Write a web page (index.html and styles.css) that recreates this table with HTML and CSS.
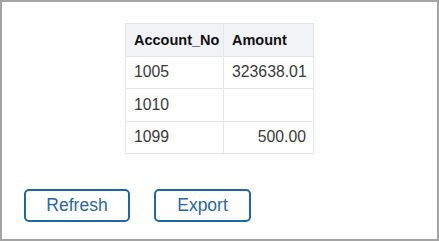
FILE: index.html
```html
<!DOCTYPE html>
<html>
<head>
<meta charset="utf-8">
<link rel="stylesheet" href="styles.css">
</head>
<body>
<div class="frame">
  <div class="table-wrap">
    <table class="grid">
      <thead>
        <tr><th class="col-acct">Account_No</th><th class="col-amt">Amount</th></tr>
      </thead>
      <tbody>
        <tr><td>1005</td><td class="num">323638.01</td></tr>
        <tr><td>1010</td><td class="num"></td></tr>
        <tr><td>1099</td><td class="num">500.00</td></tr>
      </tbody>
    </table>
  </div>
  <div class="actions">
    <button class="btn btn-refresh">Refresh</button>
    <button class="btn btn-export">Export</button>
  </div>
</div>
</body>
</html>
```
FILE: styles.css
```css
html, body {
  margin: 0;
  padding: 0;
  background: #ffffff;
}
.frame {
  box-sizing: border-box;
  width: 439px;
  height: 241px;
  border: 2px solid #a4a4a4;
  background: #fff;
  font-family: "Liberation Sans", Arial, sans-serif;
  padding: 21px 0 0 0;
}
.table-wrap {
  display: flex;
  padding-left: 123px;
}
.grid {
  border-collapse: collapse;
  border: 1px solid #e3e7ec;
  table-layout: fixed;
  width: 189px;
}
.grid th, .grid td {
  border: 1px solid #e3e7ec;
  padding: 0 7px 0 8px;
  height: 31.5px;
  text-align: left;
  white-space: nowrap;
  overflow: visible;
}
.grid th {
  background: #f1f3f7;
  color: #111;
  font-weight: bold;
  font-size: 14.5px;
}
.grid td {
  color: #3a3a3a;
  font-size: 15.8px;
}
.grid .col-acct { width: 82px; }
.grid td.num { text-align: right; }
.actions {
  display: flex;
  gap: 24px;
  padding: 35px 0 0 22px;
}
.btn {
  box-sizing: border-box;
  height: 33px;
  border: 2px solid #1f67a3;
  border-radius: 5px;
  background: #fff;
  color: #2867a0;
  font-family: "Liberation Sans", Arial, sans-serif;
  font-size: 17.5px;
  padding: 0;
}
.btn-refresh { width: 106px; }
.btn-export { width: 97px; }
```
